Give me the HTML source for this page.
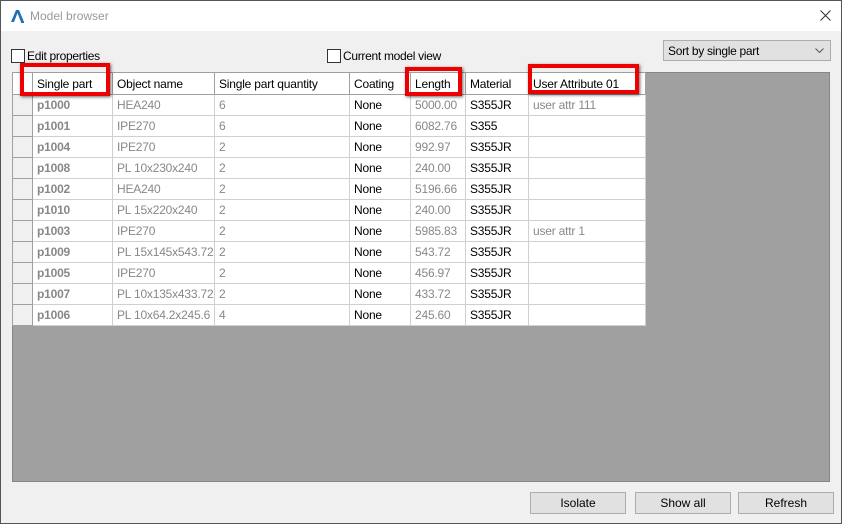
<!DOCTYPE html><html><head><style>
body{margin:0;width:842px;height:524px;overflow:hidden;background:#f0f0f0;font-family:"Liberation Sans",sans-serif;font-size:12px;position:relative}
.abs{position:absolute}
.title{left:0;top:0;width:842px;height:31px;background:#fff}
.frame{left:0;top:0;width:840px;height:522px;border:1px solid #555;}
.grid{left:12px;top:72px;width:818px;height:410px;background:#a0a0a0;border:1px solid #828790;box-sizing:border-box}
table{position:absolute;left:12px;top:72px;border-collapse:collapse;background:#fff;table-layout:fixed;width:633px}
td{height:20px;border:1px solid #d0d0d0;padding:0 0 0 4px;white-space:nowrap;overflow:hidden;color:#888;font-size:12px;letter-spacing:-0.2px}
tr.h td{background:#fff;color:#000;height:21px;border-color:#a0a0a0;padding-left:4px}
td.rh{background:#f0f0f0;padding:0;border-color:#a0a0a0}
td.b{font-weight:bold;color:#888}
td.k{color:#000}
.red{border:4px solid #e00;box-sizing:border-box;box-shadow:1px 1px 3px rgba(0,0,0,.6)}
.btn{border:1px solid #adadad;background:#e1e1e1;text-align:center;line-height:20px;box-sizing:border-box;height:22px}
.cb{width:12px;height:12px;border:1px solid #333;background:#fff}
</style></head><body>
<div class="abs title"></div>
<div class="abs frame"></div>
<svg class="abs" style="left:9px;top:8px" width="16" height="16"><path d="M2 14 L7 2 L10 2 L15 14 L12 14 L8.5 5 L5 14Z" fill="#1f6fb8"/><rect x="12" y="14" width="3" height="1" fill="#1f6fb8"/></svg>
<div class="abs" style="left:30px;top:9px;font-size:12px;color:#999">Model browser</div>
<svg class="abs" style="left:820px;top:10px" width="11" height="11"><path d="M0.5 0.5L10.5 10.5M10.5 0.5L0.5 10.5" stroke="#333" stroke-width="1"/></svg>
<div class="abs cb" style="left:11px;top:49px"></div><div class="abs" style="left:27px;top:49px;letter-spacing:-0.3px">Edit properties</div>
<div class="abs cb" style="left:327px;top:49px"></div><div class="abs" style="left:343px;top:49px;letter-spacing:-0.3px">Current model view</div>
<div class="abs" style="left:663px;top:40px;width:168px;height:21px;border:1px solid #adadad;background:#e1e1e1;box-sizing:border-box;padding:3px 0 0 4px;letter-spacing:-0.3px">Sort by single part<svg style="position:absolute;right:6px;top:7px" width="9" height="5"><path d="M0.5 0.5L4.5 4.5L8.5 0.5" stroke="#555" fill="none"/></svg></div>
<div class="abs grid"></div>
<table>
<colgroup><col style="width:20px"><col style="width:80px"><col style="width:102px"><col style="width:135px"><col style="width:61px"><col style="width:55px"><col style="width:63px"><col style="width:117px"></colgroup>
<tr class="h"><td class="rh"></td><td>Single part</td><td>Object name</td><td>Single part quantity</td><td>Coating</td><td>Length</td><td>Material</td><td>User Attribute 01</td></tr>
<tr><td class="rh"></td><td class="b">p1000</td><td>HEA240</td><td>6</td><td class="k">None</td><td>5000.00</td><td class="k">S355JR</td><td>user attr 111</td></tr>
<tr><td class="rh"></td><td class="b">p1001</td><td>IPE270</td><td>6</td><td class="k">None</td><td>6082.76</td><td class="k">S355</td><td></td></tr>
<tr><td class="rh"></td><td class="b">p1004</td><td>IPE270</td><td>2</td><td class="k">None</td><td>992.97</td><td class="k">S355JR</td><td></td></tr>
<tr><td class="rh"></td><td class="b">p1008</td><td>PL 10x230x240</td><td>2</td><td class="k">None</td><td>240.00</td><td class="k">S355JR</td><td></td></tr>
<tr><td class="rh"></td><td class="b">p1002</td><td>HEA240</td><td>2</td><td class="k">None</td><td>5196.66</td><td class="k">S355JR</td><td></td></tr>
<tr><td class="rh"></td><td class="b">p1010</td><td>PL 15x220x240</td><td>2</td><td class="k">None</td><td>240.00</td><td class="k">S355JR</td><td></td></tr>
<tr><td class="rh"></td><td class="b">p1003</td><td>IPE270</td><td>2</td><td class="k">None</td><td>5985.83</td><td class="k">S355JR</td><td>user attr 1</td></tr>
<tr><td class="rh"></td><td class="b">p1009</td><td>PL 15x145x543.72</td><td>2</td><td class="k">None</td><td>543.72</td><td class="k">S355JR</td><td></td></tr>
<tr><td class="rh"></td><td class="b">p1005</td><td>IPE270</td><td>2</td><td class="k">None</td><td>456.97</td><td class="k">S355JR</td><td></td></tr>
<tr><td class="rh"></td><td class="b">p1007</td><td>PL 10x135x433.72</td><td>2</td><td class="k">None</td><td>433.72</td><td class="k">S355JR</td><td></td></tr>
<tr><td class="rh"></td><td class="b">p1006</td><td>PL 10x64.2x245.6</td><td>4</td><td class="k">None</td><td>245.60</td><td class="k">S355JR</td><td></td></tr>
</table>
<div class="abs red" style="left:20px;top:63px;width:90px;height:33px"></div>
<div class="abs red" style="left:405px;top:67px;width:57px;height:29px"></div>
<div class="abs red" style="left:528px;top:64px;width:111px;height:30px"></div>
<div class="abs btn" style="left:530px;top:492px;width:96px">Isolate</div>
<div class="abs btn" style="left:635px;top:492px;width:96px">Show all</div>
<div class="abs btn" style="left:738px;top:492px;width:96px">Refresh</div>
</body></html>
